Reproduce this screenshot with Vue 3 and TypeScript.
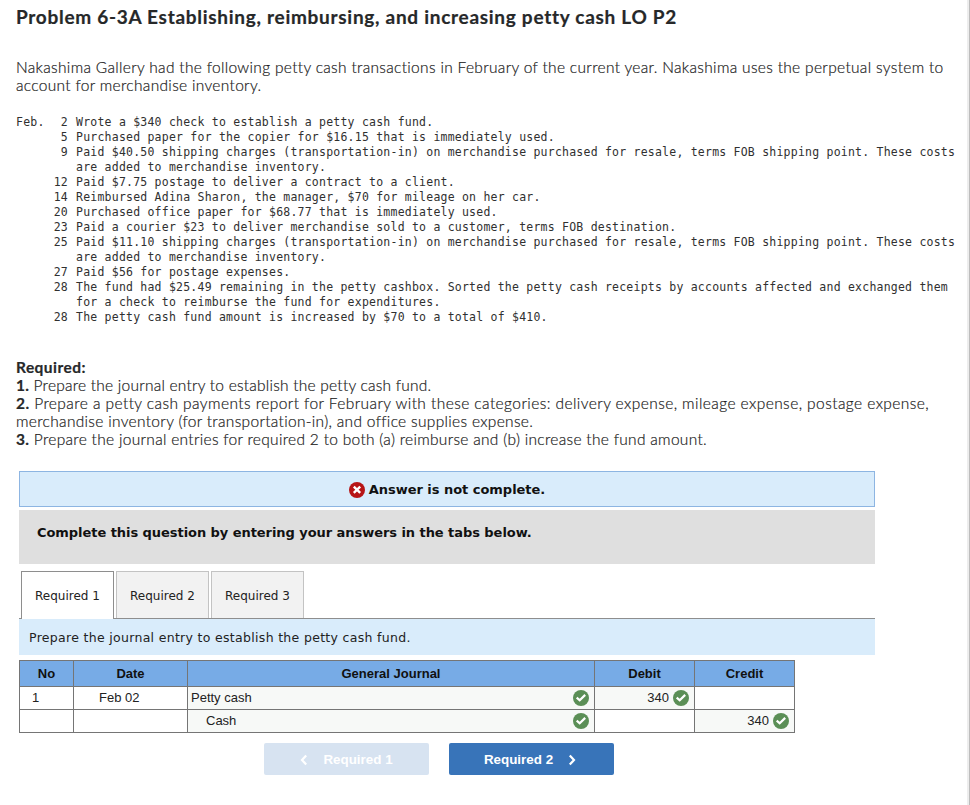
<script setup lang="ts">
interface Transaction {
  month?: string
  day: number
  lines: string[]
}

interface Tab {
  label: string
  active: boolean
}

interface JournalRow {
  no: string
  date: string
  account: string
  indent: boolean
  debit: string
  credit: string
}

const transactions: Transaction[] = [
  { month: 'Feb.', day: 2, lines: ['Wrote a $340 check to establish a petty cash fund.'] },
  { day: 5, lines: ['Purchased paper for the copier for $16.15 that is immediately used.'] },
  {
    day: 9,
    lines: [
      'Paid $40.50 shipping charges (transportation-in) on merchandise purchased for resale, terms FOB shipping point. These costs',
      'are added to merchandise inventory.',
    ],
  },
  { day: 12, lines: ['Paid $7.75 postage to deliver a contract to a client.'] },
  { day: 14, lines: ['Reimbursed Adina Sharon, the manager, $70 for mileage on her car.'] },
  { day: 20, lines: ['Purchased office paper for $68.77 that is immediately used.'] },
  { day: 23, lines: ['Paid a courier $23 to deliver merchandise sold to a customer, terms FOB destination.'] },
  {
    day: 25,
    lines: [
      'Paid $11.10 shipping charges (transportation-in) on merchandise purchased for resale, terms FOB shipping point. These costs',
      'are added to merchandise inventory.',
    ],
  },
  { day: 27, lines: ['Paid $56 for postage expenses.'] },
  {
    day: 28,
    lines: [
      'The fund had $25.49 remaining in the petty cashbox. Sorted the petty cash receipts by accounts affected and exchanged them',
      'for a check to reimburse the fund for expenditures.',
    ],
  },
  { day: 28, lines: ['The petty cash fund amount is increased by $70 to a total of $410.'] },
]

const tabs: Tab[] = [
  { label: 'Required 1', active: true },
  { label: 'Required 2', active: false },
  { label: 'Required 3', active: false },
]

const rows: JournalRow[] = [
  { no: '1', date: 'Feb 02', account: 'Petty cash', indent: false, debit: '340', credit: '' },
  { no: '', date: '', account: 'Cash', indent: true, debit: '', credit: '340' },
]
</script>

<template>
  <main class="page">
    <h1 class="title">Problem 6-3A Establishing, reimbursing, and increasing petty cash LO P2</h1>

    <p class="prose intro">
      <span class="line">Nakashima Gallery had the following petty cash transactions in February of the current year. Nakashima uses the perpetual system to</span>
      <span class="line">account for merchandise inventory.</span>
    </p>

    <div class="transactions">
      <template v-for="(t, i) in transactions" :key="i">
        <span>{{ t.month }}</span>
        <span class="day">{{ t.day }}</span>
        <span class="desc"><span v-for="l in t.lines" :key="l" class="line">{{ l }}</span></span>
      </template>
    </div>

    <div class="prose required">
      <span class="line r0"><b>Required:</b></span>
      <span class="line r1"><b>1.</b> Prepare the journal entry to establish the petty cash fund.</span>
      <span class="line r2"><b>2.</b> Prepare a petty cash payments report for February with these categories: delivery expense, mileage expense, postage expense,</span>
      <span class="line">merchandise inventory (for transportation-in), and office supplies expense.</span>
      <span class="line r4"><b>3.</b> Prepare the journal entries for required 2 to both (a) reimburse and (b) increase the fund amount.</span>
    </div>

    <section class="answer">
      <div class="alert">
        <svg class="badge" viewBox="0 0 16 16">
          <circle cx="8" cy="8" r="8" fill="#b71516" />
          <path d="M4.8 4.7 11.2 10.9M11.2 4.7 4.8 10.9" stroke="#fff" stroke-width="2.4" fill="none" />
        </svg>
        <span>Answer is not complete.</span>
      </div>
      <div class="instructions"><span>Complete this question by entering your answers in the tabs below.</span></div>

      <div class="tabs">
        <div v-for="tab in tabs" :key="tab.label" class="tab" :class="{ active: tab.active }">
          <span>{{ tab.label }}</span>
        </div>
      </div>
      <div class="prompt"><span>Prepare the journal entry to establish the petty cash fund.</span></div>

      <table class="journal">
        <colgroup>
          <col class="c-no" /><col class="c-date" /><col class="c-account" /><col class="c-amount" /><col class="c-amount" />
        </colgroup>
        <thead>
          <tr><th>No</th><th>Date</th><th>General Journal</th><th>Debit</th><th>Credit</th></tr>
        </thead>
        <tbody>
          <tr v-for="(row, i) in rows" :key="i">
            <td class="no">{{ row.no }}</td>
            <td class="date">{{ row.date }}</td>
            <td class="graded">
              <div class="cell">
                <span :class="{ indent: row.indent }">{{ row.account }}</span>
                <svg class="badge" viewBox="0 0 16 16">
                  <circle cx="8" cy="8" r="8" fill="#5b8f56" />
                  <path d="M3.7 7.6 6.7 10.3 12.2 4.9" stroke="#fff" stroke-width="2.2" fill="none" />
                </svg>
              </div>
            </td>
            <td v-for="(amount, j) in [row.debit, row.credit]" :key="j" :class="{ graded: amount }">
              <div v-if="amount" class="cell amount">
                <span>{{ amount }}</span>
                <svg class="badge" viewBox="0 0 16 16">
                  <circle cx="8" cy="8" r="8" fill="#5b8f56" />
                  <path d="M3.7 7.6 6.7 10.3 12.2 4.9" stroke="#fff" stroke-width="2.2" fill="none" />
                </svg>
              </div>
            </td>
          </tr>
        </tbody>
      </table>

      <div class="nav">
        <button class="btn" disabled>
          <svg class="chev" viewBox="0 0 8 12"><path d="M6.2 1.4 2 6 6.2 10.6" /></svg>
          <span>Required 1</span>
        </button>
        <button class="btn next">
          <span>Required 2</span>
          <svg class="chev" viewBox="0 0 8 12"><path d="M1.8 1.4 6 6 1.8 10.6" /></svg>
        </button>
      </div>
    </section>
  </main>
</template>

<style>
body {
  margin: 0;
  background: #fff;
}
</style>

<style scoped>
.page {
  box-sizing: border-box;
  width: 970px;
  height: 805px;
  padding: 5px 0 0 16px;
  overflow: hidden;
  border-right: 1px solid #bdbdbd;
  box-shadow: inset -2px 0 #ededed;
  color: #262829;
}
.title {
  height: 24px;
  margin: 0;
  font: 700 19px/24px Lato, sans-serif;
  letter-spacing: 0.715px;
  white-space: nowrap;
  -webkit-text-stroke: 0.2px;
}
.prose {
  margin: 0;
  font: 300 15.5px/18px Lato, sans-serif;
  letter-spacing: 0.323px;
  color: #222;
  -webkit-text-stroke: 0.2px;
}
.prose b {
  font-weight: 700;
  color: #262829;
}
.line {
  display: block;
  white-space: nowrap;
}
.r0 {
  letter-spacing: 0.45px;
}
.r1 {
  letter-spacing: 0.235px;
}
.r2 {
  letter-spacing: 0.426px;
}
.r4 {
  letter-spacing: 0.31px;
}
.intro {
  margin-top: 29px;
}
.transactions {
  display: grid;
  grid-template-columns: 32px 20px auto;
  justify-content: start;
  margin-top: 21px;
  font: 11.5px/15px 'DejaVu Sans Mono', monospace;
  letter-spacing: 0.224px;
  color: #303030;
}
.day {
  text-align: right;
}
.desc {
  padding-left: 8px;
}
.required {
  margin-top: 33px;
}
.answer {
  width: 856px;
  margin: 23px 0 0 3px;
  font: 13px/16px 'DejaVu Sans', sans-serif;
  color: #222;
}
.alert {
  display: flex;
  box-sizing: border-box;
  height: 36px;
  padding: 2px 0 0;
  align-items: center;
  justify-content: center;
  gap: 4px;
  border: 1px solid #8db5e2;
  background: #d9ecfb;
  font-weight: 700;
  letter-spacing: -0.03px;
  color: #111;
}
.badge {
  width: 16px;
  height: 16px;
  flex: none;
}
.instructions {
  box-sizing: border-box;
  height: 54px;
  margin-top: 3px;
  padding: 15px 18px;
  background: #dfdfdf;
  font-weight: 700;
  letter-spacing: -0.055px;
  color: #111;
}
.tabs {
  display: flex;
  box-sizing: border-box;
  height: 48px;
  margin-top: 7px;
  padding-left: 2px;
  gap: 2px;
  border-bottom: 1px solid #8e8e8e;
}
.tab {
  display: flex;
  box-sizing: border-box;
  width: 93px;
  height: 47px;
  padding-top: 2px;
  align-items: center;
  justify-content: center;
  border: 1px solid #c3c3c3;
  border-bottom: 0;
  background: #f2f2f2;
  font-size: 12px;
  white-space: nowrap;
}
.tab.active {
  height: 48px;
  padding-top: 1px;
  border-color: #8e8e8e;
  background: #fff;
}
.prompt {
  box-sizing: border-box;
  height: 36px;
  padding: 11px 10px 0;
  background: #d9ecfb;
  font-size: 12.5px;
  letter-spacing: 0.31px;
}
.journal {
  width: 776px;
  margin-top: 5px;
  border-collapse: collapse;
  table-layout: fixed;
  font: 13px/16px 'Liberation Sans', Arial, sans-serif;
}
.c-no {
  width: 54px;
}
.c-date {
  width: 114px;
}
.c-account {
  width: 407px;
}
.c-amount {
  width: 100px;
}
.journal th,
.journal td {
  box-sizing: border-box;
  padding: 0;
  border: 1px solid #757575;
}
.journal th {
  height: 26px;
  background: #77abe6;
  color: #111;
}
.journal td {
  height: 23px;
}
.journal td.no {
  padding-left: 12px;
}
.journal td.date {
  padding-left: 25px;
}
.journal .graded {
  background: #f7f9f7;
}
.cell {
  display: flex;
  align-items: center;
  justify-content: space-between;
  padding: 0 5px 0 3px;
}
.cell.amount {
  justify-content: flex-end;
  gap: 4px;
}
.indent {
  padding-left: 15px;
}
.nav {
  display: flex;
  gap: 20px;
  margin: 10px 0 0 245px;
}
.btn {
  display: flex;
  box-sizing: border-box;
  width: 165px;
  height: 32px;
  align-items: center;
  justify-content: center;
  gap: 15px;
  padding: 1px 0 0;
  border: 0;
  border-radius: 2px;
  background: #3874b9;
  color: #fff;
  font: 700 13.4px/16px 'Liberation Sans', Arial, sans-serif;
}
.btn:disabled {
  background: #d7e3f1;
}
.btn.next {
  padding-right: 3px;
}
.chev {
  width: 8px;
  height: 12px;
  fill: none;
  stroke: #fff;
  stroke-width: 2.2;
}
</style>
